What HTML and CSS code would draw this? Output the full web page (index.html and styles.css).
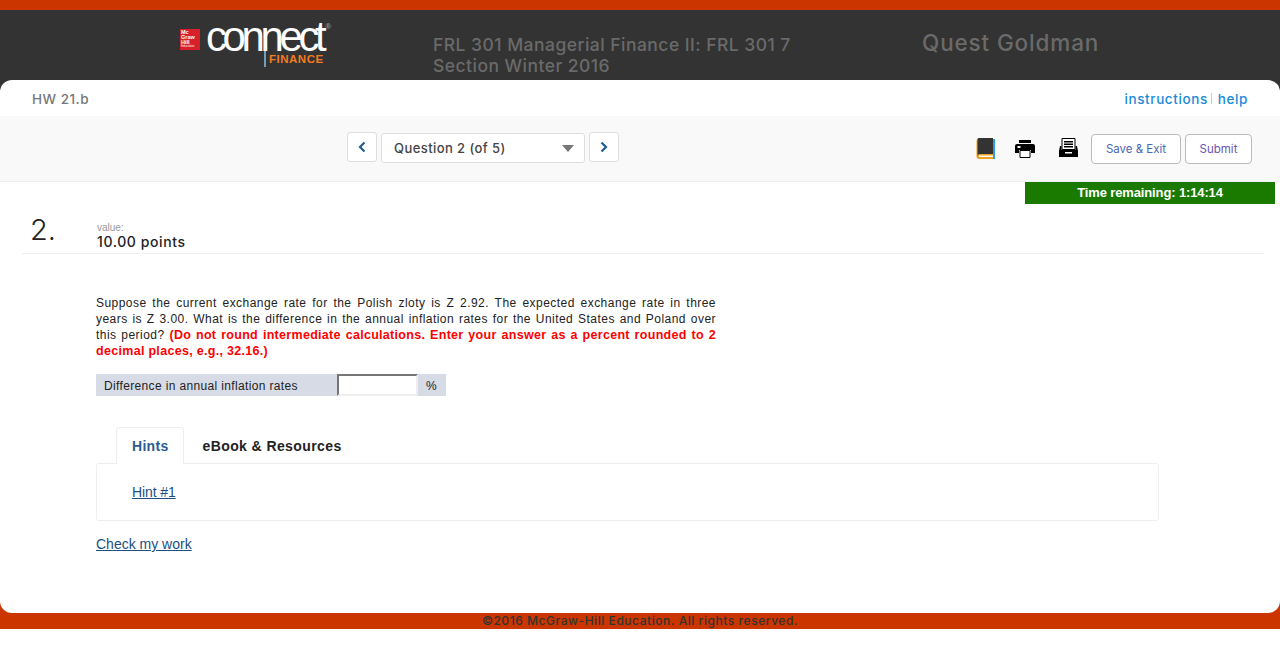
FILE: index.html
```html
<!DOCTYPE html>
<html lang="en">
<head>
<meta charset="utf-8">
<title>HW 21.b</title>
<link rel="stylesheet" href="styles.css">
</head>
<body>
<div class="top-strip"></div>
<header class="masthead">
  <div class="logo">
    <div class="mh-logo"><span>Mc<br>Graw<br>Hill</span><small>Education</small></div>
    <div class="wordmark">
      <div class="connect">connect<sup>®</sup></div>
      <div class="finance">FINANCE</div>
    </div>
  </div>
  <div class="course">FRL 301 Managerial Finance II: FRL 301 7 Section Winter 2016</div>
  <div class="student">Quest Goldman</div>
</header>
<div class="sheet-back">
<main class="sheet">
  <div class="title-row">
    <div class="hw-name">HW 21.b</div>
    <div class="links"><a>instructions</a><span class="sep"></span><a>help</a></div>
  </div>
  <div class="toolbar">
    <div class="nav">
      <button class="nav-btn"><svg width="8" height="12" viewBox="0 0 8 12"><path d="M6.500 1.500 2 6l4.500 4.500" fill="none" stroke="#1f5c8f" stroke-width="2.200"/></svg></button>
      <div class="select"><span>Question 2 (of 5)</span><i class="caret"></i></div>
      <button class="nav-btn"><svg width="8" height="12" viewBox="0 0 8 12"><path d="M1.500 1.500 6 6l-4.500 4.500" fill="none" stroke="#1f5c8f" stroke-width="2.200"/></svg></button>
    </div>
    <div class="tools">
      <svg class="ic-book" width="19" height="21" viewBox="0 0 19 21"><path d="M2 1h16v20H3C1.500 21 .5 20 .5 18.500V3C.5 2 1 1 2 1z" fill="#f0a020"/><path d="M3 0h14v16H3.500C2.500 16 1.500 17 1.500 18V1.500C1.500.7 2.200 0 3 0z" fill="#333"/><path d="M3 17.500h14v1.500H3z" fill="#fff"/><path d="M17 1h2v20h-2z" fill="#2aa0d8"/></svg>
      <svg class="ic-print" width="20" height="18" viewBox="0 0 20 18"><path d="M4 0h12v3H4z" fill="#000"/><path d="M2 4h16a2 2 0 0 1 2 2v7h-4v-3H4v3H0V6a2 2 0 0 1 2-2z" fill="#000"/><path d="M5 10.500h10v7H5z" fill="#fff" stroke="#000"/><path d="M2.500 6h3v2h-3z" fill="#fff"/></svg>
      <svg class="ic-file" width="19" height="20" viewBox="0 0 19 20"><path d="M3 .5h13v11H3z" fill="#fff" stroke="#000"/><path d="M5 3h9v1.500H5zM5 5.500h9V7H5zM5 8h9v1.500H5z" fill="#000"/><path d="M1 8h1.500v4h14V8H18l1 5v6H0v-6z" fill="#000"/><path d="M6 14h7v1.500H6z" fill="#fff"/></svg>
      <div class="actions"><button class="act act-save">Save &amp; Exit</button><button class="act act-submit">Submit</button></div>
    </div>
  </div>
  <div class="timer-row"><div class="timer">Time remaining: 1:14:14</div></div>
  <div class="q-head">
    <div class="q-num">2.</div>
    <div class="q-value"><div class="value-label">value:</div><div class="points">10.00 points</div></div>
  </div>
  <section class="q-body">
    <p class="q-text">Suppose the current exchange rate for the Polish zloty is Z 2.92. The expected exchange rate in three years is Z 3.00. What is the difference in the annual inflation rates for the United States and Poland over this period? <b class="red">(Do not round intermediate calculations. Enter your answer as a percent rounded to 2 decimal places, e.g., 32.16.)</b></p>
    <div class="answer-row">
      <div class="answer-label">Difference in annual inflation rates</div>
      <input class="answer-input" type="text">
      <div class="answer-unit">%</div>
    </div>
    <div class="tabs">
      <div class="tab active">Hints</div>
      <div class="tab">eBook &amp; Resources</div>
    </div>
    <div class="tab-panel"><a class="link hint">Hint #1</a></div>
    <a class="link check">Check my work</a>
  </section>
</main>
</div>
<footer class="footer">©2016 McGraw-Hill Education. All rights reserved.</footer>
</body>
</html>
```
FILE: styles.css
```css
* { box-sizing: border-box; }
html, body { margin: 0; padding: 0; background: #fff; }
body { font-family: "Liberation Sans", Arial, sans-serif; color: #333; height: 654px; overflow: hidden; }
.top-strip { height: 10px; background: #cb3500; }
.masthead { height: 70px; background: #333; display: flex; padding-left: 180px; }
.logo { width: 253px; display: flex; align-items: flex-start; padding-top: 19px; }
.mh-logo { width: 20px; height: 21px; background: #d8202a; color: #fff; font-size: 5.500px; line-height: 5px; font-weight: bold; padding: 1px; display: flex; flex-direction: column; overflow: hidden; }
.mh-logo small { font-size: 3px; line-height: 3px; font-weight: normal; }
.wordmark { margin-left: 6px; display: flex; flex-direction: column; width: 130px; }
.connect { color: #fff; font-size: 42px; line-height: 30px; letter-spacing: -4.400px; height: 30px; margin-top: -7px; white-space: nowrap; }
.connect sup { font-size: 8px; color: #aaa; letter-spacing: 0; vertical-align: 22px; line-height: 0; margin-left: 3px; }
.finance { color: #f47b20; font-weight: bold; font-size: 11.500px; line-height: 16px; letter-spacing: .5px; margin-left: 58px; margin-top: -1px; padding-left: 3px; border-left: 2px solid #6f9fc0; width: 62px; }
.course { width: 372px; font-family: "Inter", sans-serif; font-size: 17.500px; line-height: 21px; color: #6a6a6a; padding-top: 24px; margin-right: 117px; font-weight: 500; letter-spacing: .47px; }
.student { font-family: "Inter", sans-serif; font-size: 22.500px; color: #6a6a6a; padding-top: 19px; font-weight: 500; letter-spacing: .85px; }
.sheet-back { background: linear-gradient(#333 0 50%, #cb3500 50% 100%); height: 533px; }
.sheet { height: 533px; background: #fff; border-radius: 12px; overflow: hidden; }
.title-row { height: 36px; display: flex; justify-content: space-between; align-items: center; padding: 1px 32px 0; font-family: "Inter", sans-serif; font-size: 13.500px; font-weight: 500; }
.hw-name { color: #777; letter-spacing: .5px; }
.links { color: #1a8ad8; display: flex; align-items: center; font-size: 13.500px; letter-spacing: .6px; }
.sep { width: 1px; height: 11px; background: #ccc; margin: 0 6px 0 3px; }
.toolbar { height: 66px; background: #f9f9f9; border-bottom: 1px solid #eee; display: flex; align-items: flex-start; padding-top: 16px; }
.nav { display: flex; margin-left: 347px; gap: 4px; align-items: flex-start; }
.nav-btn { width: 30px; height: 30px; background: #fff; border: 1px solid #ddd; border-radius: 3px; padding: 0; display: flex; align-items: center; justify-content: center; }
.select { width: 204px; height: 30px; margin-top: 1px; background: #fff; border: 1px solid #ddd; border-radius: 3px; display: flex; align-items: center; justify-content: space-between; padding: 0 10px 0 12px; font-family: "Inter", sans-serif; font-size: 13px; letter-spacing: .42px; color: #444; font-weight: 500; }
.caret { width: 0; height: 0; border: 6.500px solid transparent; border-top: 7px solid #777; border-bottom: 0; }
.tools { display: flex; margin-left: auto; margin-right: 28px; align-items: flex-start; }
.ic-book { margin-top: 6px; margin-right: 20px; }
.ic-print { margin-top: 8px; margin-right: 24px; }
.ic-file { margin-top: 6px; margin-right: 13px; }
.actions { display: flex; gap: 4px; margin-top: 2px; }
.act { height: 30px; background: #fff; border: 1px solid #bbb; border-radius: 4px; font-family: "Inter", sans-serif; font-size: 11.500px; color: #4a68b5; padding: 0; }
.act-save { width: 90px; }
.act-submit { width: 67px; color: #6a55b5; }
.timer-row { display: flex; justify-content: flex-end; padding-right: 5px; }
.timer { width: 250px; height: 22px; background: #1a7a00; color: #fff; font-size: 13px; font-weight: bold; line-height: 22px; text-align: center; letter-spacing: -.13px; }
.q-head { margin: 0 16px 0 22px; height: 50px; border-bottom: 1px solid #eee; display: flex; }
.q-num { width: 75px; padding-left: 8px; font-family: "Inter", sans-serif; font-weight: 300; font-size: 29px; line-height: 36px; color: #222; padding-top: 8px; }
.value-label { font-size: 10px; color: #999; line-height: 12px; padding-top: 18px; }
.points { font-family: "Inter", sans-serif; font-size: 14px; line-height: 16px; color: #222; font-weight: 500; letter-spacing: .6px; }
.q-body { padding-left: 96px; }
.q-text { width: 620px; margin: 41px 0 0; font-size: 12px; line-height: 16px; text-align: justify; color: #222; letter-spacing: .46px; }
.red { color: #f00; font-size: 12.500px; line-height: 16px; letter-spacing: .3px; }
.answer-row { width: 350px; height: 22px; margin-top: 15px; background: #d6dbe6; display: flex; font-size: 12px; line-height: 24px; color: #222; letter-spacing: .35px; }
.answer-label { width: 241px; padding-left: 8px; }
.answer-input { width: 81px; height: 22px; border: 2px solid; border-color: #767676 #eee #eee #767676; background: #fff; padding: 0; }
.answer-unit { flex: 1; padding-left: 8px; }
.tabs { display: flex; margin: 31px 0 -1px 20px; height: 37px; position: relative; }
.tab { padding: 0 18px 0 18px; line-height: 36px; font-size: 14px; font-weight: bold; color: #222; border: 1px solid transparent; border-bottom: 0; letter-spacing: .4px; }
.tab.active { padding: 0 14px 0 15px; letter-spacing: .3px; color: #2b5d94; background: #fff; border-color: #eee; border-radius: 3px 3px 0 0; }
.tab-panel { width: 1063px; height: 58px; border: 1px solid #eee; border-radius: 3px; padding: 20px 35px; font-size: 14px; line-height: 16px; }
.link { color: #1c4f82; text-decoration: underline; font-size: 14px; }
.hint { letter-spacing: -.1px; }
.check { display: block; margin-top: 15px; line-height: 16px; }
.footer { height: 16px; background: #cb3500; color: #333; text-align: center; font-family: "Inter", sans-serif; font-size: 12px; line-height: 16px; font-weight: 500; letter-spacing: .55px; }
```
